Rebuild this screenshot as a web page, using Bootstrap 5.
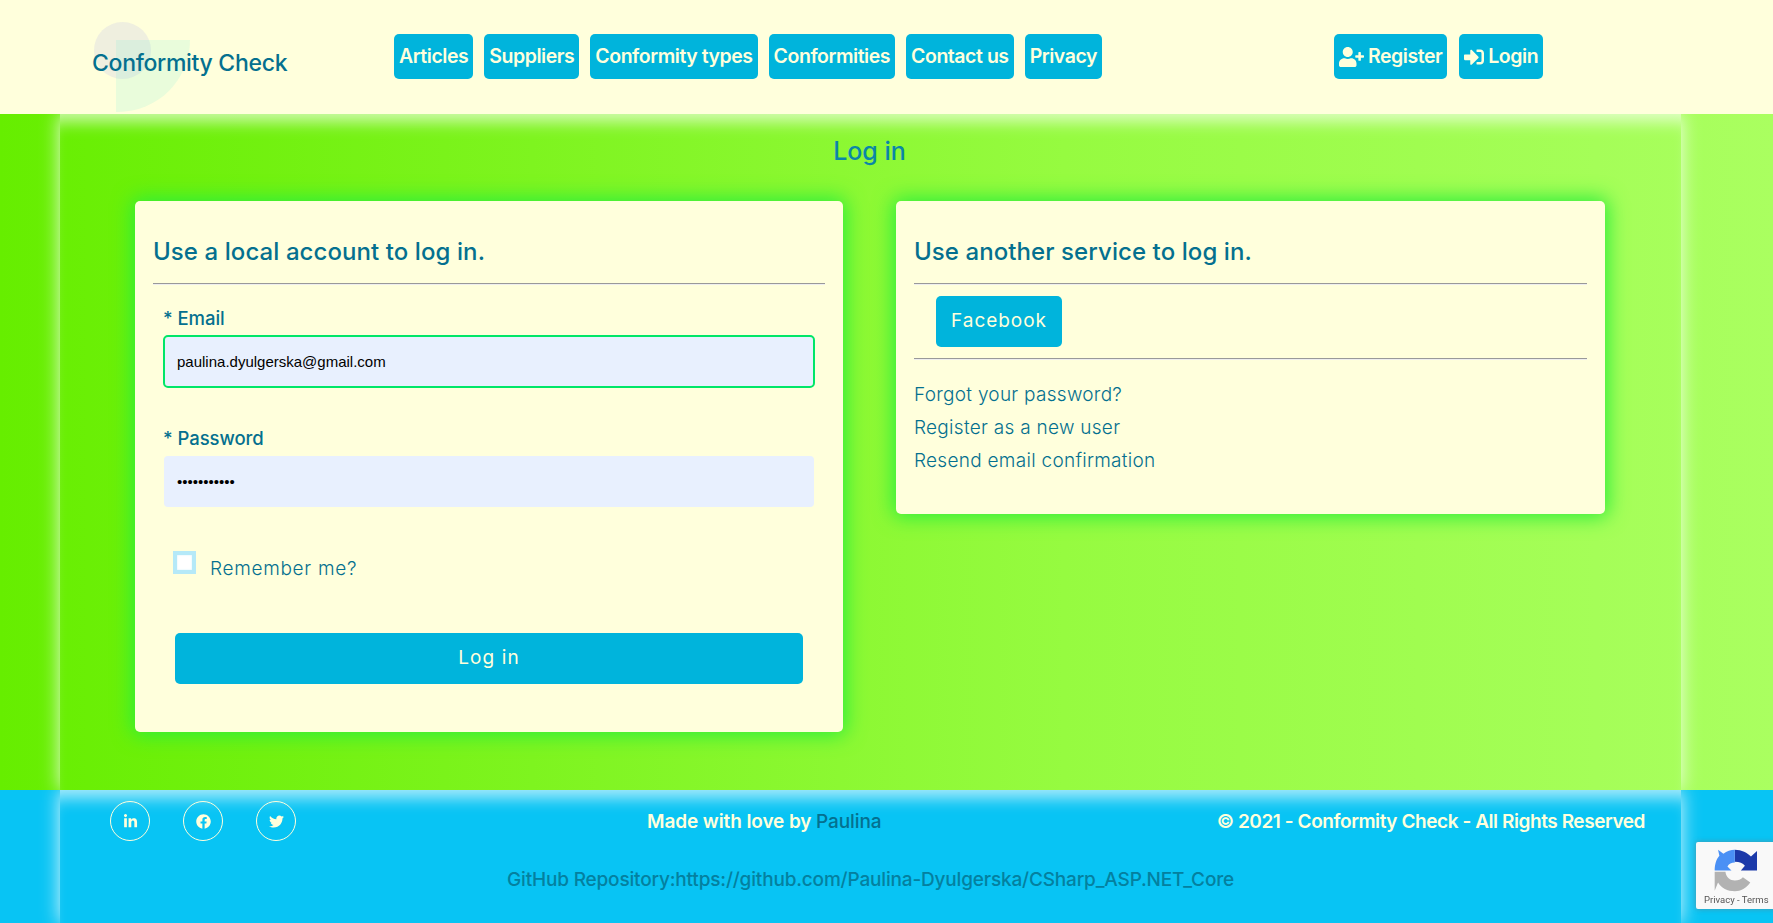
<!DOCTYPE html>
<html lang="en"><head><meta charset="utf-8"><title>Log in</title>
<link href="https://cdn.jsdelivr.net/npm/bootstrap@5.3.0/dist/css/bootstrap.min.css" rel="stylesheet">
<style>
html,body{height:923px;overflow:hidden}
body{background:#ffffdc;font-family:Inter,"Liberation Sans",sans-serif;color:#04708f}
.top-bar{height:114px;background:#ffffdc;padding:34px 0 0 92px;position:relative}
.logo-circle{position:absolute;left:94px;top:22px;width:57px;height:57px;border-radius:50%;background:rgba(190,190,230,.25)}
.logo-quarter{position:absolute;left:116px;top:40px;width:74px;height:72px;border-radius:0 0 72px 0;background:rgba(100,235,210,.14)}
.brand-txt{position:relative;width:302px;font-size:23px;font-weight:500;line-height:1;padding-top:18px;letter-spacing:-.3px;color:#04708f;flex:none}
.nav-pill{height:45px;padding:0 5px;background:#00b4dc;color:#ffffdc;border-radius:5px;font-size:19.5px;font-weight:600;letter-spacing:-.46px;display:flex;align-items:center;text-decoration:none;white-space:nowrap}
.nav-pill:hover{color:#ffffdc}
.nav-pill svg{fill:#ffffdc;height:20px;margin-right:4px}
.right-nav{margin-left:232px}
.band-main{height:676px;background:linear-gradient(90deg,#66ee00 0%,#7ef41f 30%,#96fb40 60%,#aaff60 100%);overflow:hidden}
.band-foot{height:133px;background:#08c4f4;overflow:hidden}
.glow{margin-left:60px;width:1621px;height:100%;box-shadow:0 0 18px rgba(255,255,255,.85),inset 0 18px 16px -10px rgba(255,255,255,.65)}
.page-title{font-size:25px;font-weight:500;color:#0a86a8;text-align:center;line-height:1;padding:25px 2px 0 0;margin:0 0 37px}
.card-row{padding:0 76px 0 75px;gap:53px;align-items:flex-start}
.panel{background:#ffffdc;border-radius:5px;box-shadow:0 0 20px 3px #2bee3c;width:708px;flex:none;padding:0 18px}
.panel-left{height:531px}
.panel-right{height:313px;width:709px}
.panel-h{font-size:24px;font-weight:500;line-height:1;margin:0;padding:39px 0 19px;border-bottom:1px solid #999;color:#04708f;letter-spacing:.08px;box-shadow:0 1px 0 #eee}
.form-block{padding:25px 10px 0}
.fld-label{font-size:18.5px;font-weight:500;line-height:1;margin:0 0 7px;display:block;color:#04708f;letter-spacing:-.05px}
.fld{display:block;width:100%;height:53px;border:1px solid transparent;background-clip:padding-box;border-radius:5px;background-color:#e8f0fe;padding:0 13px;font:15px "Liberation Sans",sans-serif;color:#000;outline:0}
.fld-focus{border:2px solid #00e668;padding:0 12px;padding-top:1px}
.gap-pw{margin-top:41px;margin-bottom:8px}
.check-row{display:flex;align-items:flex-start;padding:43px 0 0 10px;height:91px}
.check-box{width:23px;height:23px;background:#fff;border:4px solid #b5e9f8;flex:none;box-shadow:inset 0 0 2px #cfeffa}
.check-label{font-size:19px;margin-left:14px;font-weight:300;color:#04708f;padding-top:7px;letter-spacing:.7px;line-height:1.2}
.submit-b{display:block;margin:34px 11px 0 12px;width:628px;height:51px;background:#00b4dc;color:#ffffdc;border:0;border-radius:5px;font-size:19px;letter-spacing:1.1px;line-height:50px;text-align:center}
.fb-b{display:block;margin:12px 0 11px 22px;width:126px;height:51px;background:#00b4dc;color:#ffffdc;border-radius:5px;font-size:19px;letter-spacing:.95px;line-height:50px;text-align:center}
.svc-hr{border-bottom:1px solid #999;box-shadow:0 1px 0 #eee}
.ln-list{list-style:none;margin:0;padding:19px 0 0}
.ln-list li{height:33px;line-height:33px;font-size:19px;font-weight:300;color:#04708f;letter-spacing:.28px}
.foot-top{padding:11px 30px 0 50px;height:70px}
.soc{width:40px;height:40px;border:1.5px solid #ffffdc;border-radius:50%;display:flex;align-items:center;justify-content:center;margin-right:33px;flex:none}
.soc svg{width:15px;height:15px;fill:#ffffdc}
.foot-love{font-size:19px;font-weight:600;color:#ffffdc;letter-spacing:-.1px;margin-left:318px;white-space:nowrap;padding-top:7px}
.foot-love b{font-weight:500;color:#04708f}
.foot-copy{font-size:19px;font-weight:600;color:#ffffdc;letter-spacing:-.43px;margin-left:auto;white-space:nowrap;padding:7px 6px 0 0}
.foot-git{text-align:center;font-size:19px;font-weight:500;color:#04809f;letter-spacing:-.17px;line-height:1;padding-top:10px}
.rc-badge{position:fixed;left:1696px;top:842px;width:100px;height:67px;background:#f9f9f9;border-radius:2px;box-shadow:0 0 5px rgba(120,120,120,.6)}
.rc-badge svg{position:absolute;left:18px;top:7px;width:43px;height:43px}
.rc-txt{position:absolute;left:8px;top:52px;font:9.5px Roboto,sans-serif;color:#555;white-space:nowrap}
</style></head><body>
<div class="top-bar d-flex">
  <span class="logo-circle"></span><span class="logo-quarter"></span>
  <div class="brand-txt">Conformity Check</div>
  <nav class="d-flex align-items-start" style="column-gap:11px">
    <a class="nav-pill">Articles</a><a class="nav-pill">Suppliers</a><a class="nav-pill">Conformity types</a><a class="nav-pill">Conformities</a><a class="nav-pill">Contact us</a><a class="nav-pill">Privacy</a>
  </nav>
  <div class="right-nav d-flex align-items-start" style="column-gap:12px">
    <a class="nav-pill"><svg viewBox="0 0 640 512"><path d="M624 208h-64v-64c0-8.800-7.200-16-16-16h-32c-8.800 0-16 7.200-16 16v64h-64c-8.800 0-16 7.200-16 16v32c0 8.800 7.200 16 16 16h64v64c0 8.800 7.200 16 16 16h32c8.800 0 16-7.200 16-16v-64h64c8.800 0 16-7.200 16-16v-32c0-8.800-7.200-16-16-16zm-400 48c70.700 0 128-57.300 128-128S294.700 0 224 0 96 57.300 96 128s57.300 128 128 128zm89.600 32h-16.700c-22.200 10.200-46.900 16-72.900 16s-50.600-5.800-72.900-16h-16.700C60.200 288 0 348.200 0 422.400V464c0 26.500 21.500 48 48 48h352c26.500 0 48-21.500 48-48v-41.600c0-74.200-60.200-134.400-134.400-134.400z"/></svg>Register</a>
    <a class="nav-pill"><svg viewBox="0 0 512 512"><path d="M416 448h-84c-6.600 0-12-5.400-12-12v-40c0-6.600 5.400-12 12-12h84c17.700 0 32-14.300 32-32V160c0-17.700-14.300-32-32-32h-84c-6.600 0-12-5.400-12-12V76c0-6.600 5.400-12 12-12h84c53 0 96 43 96 96v192c0 53-43 96-96 96zm-47-201L201 79c-15-15-41-4.500-41 17v96H24c-13.300 0-24 10.700-24 24v96c0 13.300 10.700 24 24 24h136v96c0 21.500 26 32 41 17l168-168c9.300-9.400 9.300-24.600 0-34z"/></svg>Login</a>
  </div>
</div>
<div class="band-main"><div class="glow">
  <h1 class="page-title">Log in</h1>
  <div class="d-flex card-row">
    <section class="panel panel-left">
      <h4 class="panel-h">Use a local account to log in.</h4>
      <div class="form-block">
        <label class="fld-label">* Email</label>
        <input class="fld fld-focus" value="paulina.dyulgerska@gmail.com">
        <label class="fld-label gap-pw">* Password</label>
        <input class="fld" type="password" value="Paulina123!">
        <div class="check-row"><span class="check-box"></span><span class="check-label">Remember me?</span></div>
        <a class="submit-b text-decoration-none">Log in</a>
      </div>
    </section>
    <section class="panel panel-right">
      <h4 class="panel-h">Use another service to log in.</h4>
      <a class="fb-b text-decoration-none">Facebook</a>
      <div class="svc-hr"></div>
      <ul class="ln-list"><li>Forgot your password?</li><li>Register as a new user</li><li>Resend email confirmation</li></ul>
    </section>
  </div>
</div></div>
<div class="band-foot"><div class="glow">
  <div class="foot-top d-flex align-items-start">
    <span class="soc"><svg viewBox="0 0 448 512"><path d="M100.280 448H7.400V148.900h92.880zM53.790 108.100C24.090 108.100 0 83.500 0 53.800a53.790 53.790 0 0 1 107.580 0c0 29.700-24.100 54.300-53.790 54.300zM447.900 448h-92.680V302.400c0-34.700-.7-79.200-48.290-79.200-48.290 0-55.690 37.700-55.690 76.700V448h-92.780V148.900h89.080v40.800h1.300c12.400-23.500 42.690-48.300 87.880-48.300 94 0 111.280 61.900 111.280 142.300V448z"/></svg></span>
    <span class="soc"><svg viewBox="0 0 512 512"><path d="M504 256C504 119 393 8 256 8S8 119 8 256c0 123.780 90.690 226.380 209.250 245V327.690h-63V256h63v-54.640c0-62.150 37-96.480 93.670-96.480 27.140 0 55.520 4.840 55.520 4.840v61h-31.280c-30.800 0-40.410 19.120-40.410 38.730V256h68.780l-11 71.690h-57.780V501C413.310 482.380 504 379.780 504 256z"/></svg></span>
    <span class="soc"><svg viewBox="0 0 512 512"><path d="M459.370 151.716c.325 4.548.325 9.097.325 13.645 0 138.720-105.583 298.558-298.558 298.558-59.452 0-114.680-17.219-161.137-47.106 8.447.974 16.568 1.299 25.340 1.299 49.055 0 94.213-16.568 130.274-44.832-46.132-.975-84.792-31.188-98.112-72.772 6.498.974 12.995 1.624 19.818 1.624 9.421 0 18.843-1.300 27.614-3.573-48.081-9.747-84.143-51.980-84.143-102.985v-1.299c13.969 7.797 30.214 12.670 47.431 13.319-28.264-18.843-46.781-51.005-46.781-87.391 0-19.492 5.197-37.360 14.294-52.954 51.655 63.675 129.300 105.258 216.365 109.807-1.624-7.797-2.599-15.918-2.599-24.040 0-57.828 46.782-104.934 104.934-104.934 30.213 0 57.502 12.670 76.670 33.137 23.715-4.548 46.456-13.320 66.599-25.340-7.798 23.715-24.366 43.858-46.132 56.827 21.117-2.273 41.584-8.122 60.426-16.243-14.292 20.791-32.161 39.308-52.628 54.253z"/></svg></span>
    <span class="foot-love">Made with love by <b>Paulina</b></span>
    <span class="foot-copy">© 2021 - Conformity Check - All Rights Reserved</span>
  </div>
  <div class="foot-git">GitHub Repository:https://github.com/Paulina-Dyulgerska/CSharp_ASP.NET_Core</div>
</div></div>
<aside class="rc-badge">
  <svg viewBox="0 0 64 64"><path fill="#1c3aa9" d="M31 1C41 1 50 6 55 11L64 3V32H40L46 25C43 21 38 19 31 19Z"/><path fill="#4a90f5" d="M6 1L14 7C19 3 25 1 31 1V20C26 20 22 22 20 26L26 32H1C1 24 3 15 8 10Z"/><path fill="#b2b2b2" d="M1 34H17C18 42 24 47 31 47C36 47 40 45 43 42L54 50C48 58 40 63 31 63C20 63 11 58 6 50L1 62Z"/></svg>
  <span class="rc-txt">Privacy - Terms</span>
</aside>
</body></html>
